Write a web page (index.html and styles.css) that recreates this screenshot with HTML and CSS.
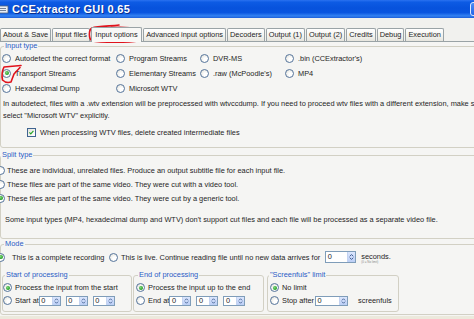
FILE: index.html
```html
<!DOCTYPE html>
<html>
<head>
<meta charset="utf-8">
<title>CCExtractor GUI 0.65</title>
<link rel="stylesheet" href="styles.css">
</head>
<body>
<div class="win">
  <div class="titlebar">
    <svg class="appicon" viewBox="0 0 10 9"><rect x="-2" y="1" width="10" height="7" fill="#e9eef7" stroke="#55657c" stroke-width="0.8"/><path d="M-1 3.5h7M-1 5.5h7" stroke="#55657c" stroke-width="0.8"/></svg>
    <span class="title">CCExtractor GUI 0.65</span>
    <span class="tbtn"></span>
  </div>
  <div class="tabbar">
    <span class="tab">About &amp; Save</span>
    <span class="tab">Input files</span>
    <span class="tab tab-sel">Input options</span>
    <span class="tab">Advanced input options</span>
    <span class="tab">Decoders</span>
    <span class="tab">Output (1)</span>
    <span class="tab">Output (2)</span>
    <span class="tab">Credits</span>
    <span class="tab">Debug</span>
    <span class="tab">Execution</span>
  </div>
  <div class="panel">
    <fieldset class="grp g-input">
      <legend>Input type</legend>
      <div class="rgrid">
        <div class="opt"><span class="rb"></span>Autodetect the correct format</div>
        <div class="opt"><span class="rb"></span>Program Streams</div>
        <div class="opt"><span class="rb"></span>DVR-MS</div>
        <div class="opt"><span class="rb"></span>.bin (CCExtractor's)</div>
        <div class="opt"><span class="rb on"></span>Transport Streams</div>
        <div class="opt"><span class="rb"></span>Elementary Streams</div>
        <div class="opt"><span class="rb"></span>.raw (McPoodle's)</div>
        <div class="opt"><span class="rb"></span>MP4</div>
        <div class="opt"><span class="rb"></span>Hexadecimal Dump</div>
        <div class="opt"><span class="rb"></span>Microsoft WTV</div>
      </div>
      <p class="note">In autodetect, files with a .wtv extension will be preprocessed with wtvccdump. If you need to proceed wtv files with a different extension, make sure to<br>select "Microsoft WTV" explicitly.</p>
      <div class="chk-row"><span class="cb"><svg viewBox="0 0 9 9"><path d="M1.8 4.4 L3.6 6.3 L7 2.4" fill="none" stroke="#22a322" stroke-width="1.4"/></svg></span>When processing WTV files, delete created intermediate files</div>
    </fieldset>

    <fieldset class="grp g-split">
      <legend>Split type</legend>
      <div class="split-rows">
        <div class="opt opt-split"><span class="rb"></span>These are individual, unrelated files. Produce an output subtitle file for each input file.</div>
        <div class="opt opt-split"><span class="rb"></span>These files are part of the same video. They were cut with a video tool.</div>
        <div class="opt opt-split"><span class="rb on"></span>These files are part of the same video. They were cut by a generic tool.</div>
      </div>
      <p class="note note-split">Some input types (MP4, hexadecimal dump and WTV) don't support cut files and each file will be processed as a separate video file.</p>
    </fieldset>

    <fieldset class="grp g-mode">
      <legend>Mode</legend>
      <div class="mode-row">
        <div class="opt opt-complete"><span class="rb on"></span>This is a complete recording</div>
        <div class="opt opt-live"><span class="rb"></span>This is live. Continue reading file until no new data arrives for</div>
        <span class="spin spin-m"><span class="v">0</span><span class="btns"><svg viewBox="0 0 8 10"><path d="M2 4.2 L4 2.2 L6 4.2 M2 5.8 L4 7.8 L6 5.8" fill="none" stroke="#3c5a8c" stroke-width="1.1"/></svg></span></span>
        <span class="secs"><span>seconds.</span><span class="tiny">(0 = No limit)</span></span>
      </div>
      <div class="subs">
        <fieldset class="grp sub s-start">
          <legend>Start of processing</legend>
          <div class="opt opt-sub"><span class="rb on"></span>Process the input from the start</div>
          <div class="opt opt-sub"><span class="rb"></span>Start at
            <span class="spins">
              <span class="spin"><span class="v">0</span><span class="btns"><svg viewBox="0 0 8 10"><path d="M2 4.2 L4 2.2 L6 4.2 M2 5.8 L4 7.8 L6 5.8" fill="none" stroke="#3c5a8c" stroke-width="1.1"/></svg></span></span>
              <span class="spin"><span class="v">0</span><span class="btns"><svg viewBox="0 0 8 10"><path d="M2 4.2 L4 2.2 L6 4.2 M2 5.8 L4 7.8 L6 5.8" fill="none" stroke="#3c5a8c" stroke-width="1.1"/></svg></span></span>
              <span class="spin"><span class="v">0</span><span class="btns"><svg viewBox="0 0 8 10"><path d="M2 4.2 L4 2.2 L6 4.2 M2 5.8 L4 7.8 L6 5.8" fill="none" stroke="#3c5a8c" stroke-width="1.1"/></svg></span></span>
            </span>
          </div>
        </fieldset>
        <fieldset class="grp sub s-end">
          <legend>End of processing</legend>
          <div class="opt opt-sub"><span class="rb on"></span>Process the input up to the end</div>
          <div class="opt opt-sub"><span class="rb"></span>End at
            <span class="spins">
              <span class="spin"><span class="v">0</span><span class="btns"><svg viewBox="0 0 8 10"><path d="M2 4.2 L4 2.2 L6 4.2 M2 5.8 L4 7.8 L6 5.8" fill="none" stroke="#3c5a8c" stroke-width="1.1"/></svg></span></span>
              <span class="spin"><span class="v">0</span><span class="btns"><svg viewBox="0 0 8 10"><path d="M2 4.2 L4 2.2 L6 4.2 M2 5.8 L4 7.8 L6 5.8" fill="none" stroke="#3c5a8c" stroke-width="1.1"/></svg></span></span>
              <span class="spin"><span class="v">0</span><span class="btns"><svg viewBox="0 0 8 10"><path d="M2 4.2 L4 2.2 L6 4.2 M2 5.8 L4 7.8 L6 5.8" fill="none" stroke="#3c5a8c" stroke-width="1.1"/></svg></span></span>
            </span>
          </div>
        </fieldset>
        <fieldset class="grp sub s-scr">
          <legend>"Screenfuls" limit</legend>
          <div class="opt opt-sub"><span class="rb on"></span>No limit</div>
          <div class="opt opt-sub"><span class="rb"></span>Stop after<span class="spin spin-s"><span class="v">0</span><span class="btns"><svg viewBox="0 0 8 10"><path d="M2 4.2 L4 2.2 L6 4.2 M2 5.8 L4 7.8 L6 5.8" fill="none" stroke="#3c5a8c" stroke-width="1.1"/></svg></span></span><span class="scr-lbl">screenfuls</span></div>
        </fieldset>
      </div>
    </fieldset>
  </div>

  <svg class="annot" viewBox="0 0 474 319">
    <path d="M119 25 C110 26 97 26.5 92 28 C88.5 30 88.5 38.5 92 41 C100 42.6 130 42.6 138 41 C141.8 39 141.8 31 138.5 29 C131 27.4 121 27 111 27.6" fill="none" stroke="#e0121c" stroke-width="1.6" stroke-linecap="round"/>
    <path d="M21 65.5 L4 67 Q1 73 2.5 80 Q6 83.5 11 82 L14 74 L20 67.5" fill="none" stroke="#e0121c" stroke-width="1.6" stroke-linecap="round" stroke-linejoin="round"/>
  </svg>
</div>
</body>
</html>
```

FILE: styles.css
```css
* { box-sizing: border-box; }

html, body {
  margin: 0;
  padding: 0;
}

body {
  width: 474px;
  height: 319px;
  overflow: hidden;
  background: #ece9dc;
  font-family: "Liberation Sans", Arial, sans-serif;
  font-size: 7.4px;
  color: #1e1e1e;
}

.win {
  position: relative;
  width: 474px;
  height: 319px;
  overflow: hidden;
  display: flex;
  flex-direction: column;
}

/* Title bar */
.titlebar {
  flex: none;
  height: 18px;
  display: flex;
  align-items: center;
  background: linear-gradient(to bottom, #2a72f0 0%, #0d5be4 12%, #0752dc 45%, #0a56e0 70%, #3382f2 88%, #1d5fd9 100%);
}

.appicon {
  flex: none;
  width: 10px;
  height: 9px;
}

.title {
  margin-left: 2px;
  color: #fff;
  font-weight: bold;
  font-size: 11px;
  letter-spacing: 0.35px;
  text-shadow: 1px 1px 0 #0b2f8f;
  white-space: nowrap;
}

.tbtn {
  flex: none;
  margin-left: auto;
  margin-right: -12px;
  width: 16px;
  height: 14px;
  border: 1px solid #dfe8fb;
  border-radius: 3px;
  background: linear-gradient(#4d8ff6, #2465e6);
}

/* Tabs */
.tabbar {
  flex: none;
  height: 24px;
  display: flex;
  align-items: flex-end;
  gap: 1px;
  background: #f1f1ee;
  border-bottom: 1px solid #9aa3a6;
}

.tab {
  height: 13px;
  padding: 0 2px;
  display: flex;
  align-items: center;
  white-space: nowrap;
  line-height: 1;
  border: 1px solid #9aa3a6;
  border-bottom: none;
  border-radius: 2px 2px 0 0;
  background: linear-gradient(#ffffff, #f3f3ef 55%, #e6e5de);
}

.tab-sel {
  height: 15px;
  margin-bottom: -1px;
  padding: 0 3.5px;
  background: #f8f8f6;
  position: relative;
  z-index: 1;
}

/* Panel */
.panel {
  flex: none;
  background: #f5f5f3;
  display: flex;
  flex-direction: column;
  padding-bottom: 1px;
}

.grp {
  margin: 0;
  padding: 0;
  min-width: 0;
  border: 1px solid #d2d0c4;
  border-radius: 3px;
}

.grp > legend {
  margin-left: 3px;
  padding: 0 1px;
  line-height: 8px;
  font-size: 7.4px;
  color: #2a5cc6;
  white-space: nowrap;
}

.opt {
  display: flex;
  align-items: center;
  gap: 4px;
  white-space: nowrap;
}

.rb {
  flex: none;
  position: relative;
  width: 9px;
  height: 9px;
  border-radius: 50%;
  border: 1px solid #56759c;
  background: radial-gradient(circle at 65% 65%, #ffffff 25%, #e2e2da 90%);
}

.rb.on::after {
  content: "";
  position: absolute;
  left: 1.5px;
  top: 1.5px;
  width: 4px;
  height: 4px;
  border-radius: 50%;
  background: radial-gradient(circle at 40% 40%, #7fd77f, #1f9c1f 70%);
}

/* Input type */
.g-input {
  width: 482px;
  padding-bottom: 8px;
}

.rgrid {
  display: grid;
  grid-template-columns: 114px 84px 85px auto;
  grid-auto-rows: 15px;
  padding-left: 1px;
  margin-top: 0.5px;
}

.note {
  margin: 2px 0 0 2px;
  line-height: 12px;
  white-space: nowrap;
}

.chk-row {
  display: flex;
  align-items: center;
  gap: 4px;
  height: 14px;
  margin: 3.5px 0 0 26px;
  white-space: nowrap;
}

.cb {
  flex: none;
  width: 9px;
  height: 9px;
  border: 1px solid #3f6490;
  background: linear-gradient(135deg, #e4e4dc, #ffffff);
  display: flex;
}

.cb svg {
  width: 100%;
  height: 100%;
}

/* Split type */
.g-split {
  width: 482px;
  margin-top: 3px;
  padding-bottom: 12px;
}

.g-split > legend {
  margin-left: 0;
}

.split-rows {
  display: flex;
  flex-direction: column;
  margin: 4px 0 0 -5px;
}

.opt-split {
  height: 14px;
  gap: 2px;
}

.note-split {
  margin: 9px 0 0 4px;
}

/* Mode */
.g-mode {
  width: 482px;
  margin-top: 1px;
  padding-bottom: 2px;
}

.mode-row {
  display: flex;
  align-items: center;
  height: 14px;
  margin: 2px 0 0 -5px;
}

.opt-complete {
  width: 113px;
  gap: 7px;
}

.opt-live {
  gap: 3px;
}

.spin {
  flex: none;
  display: flex;
  align-items: stretch;
  width: 22px;
  height: 10px;
  border: 1px solid #7f9db9;
  background: #fff;
}

.spin .v {
  flex: 1;
  padding-left: 1.5px;
  line-height: 8px;
}

.spin .btns {
  flex: none;
  width: 8px;
  display: flex;
  background: linear-gradient(#dbe6fd, #bccff6);
  border-left: 1px solid #c4d3f1;
}

.spin .btns svg {
  width: 100%;
  height: 100%;
}

.spin-m {
  width: 31px;
  height: 12px;
  margin-left: 5px;
}

.spin-m .v {
  line-height: 10px;
}

.secs {
  display: flex;
  flex-direction: column;
  margin-left: 5px;
  line-height: 9px;
  padding-top: 2px;
}

.tiny {
  font-size: 3px;
  line-height: 3px;
  color: #8a8a8a;
}

.subs {
  display: flex;
  margin-top: 7px;
}

.sub {
  padding: 2px 0 4px 0;
}

.sub .opt-sub {
  height: 13px;
  gap: 3px;
}

.s-start {
  width: 130px;
  margin-left: 1px;
}

.s-start > legend {
  margin-left: 2px;
}

.s-end {
  width: 131px;
  margin-left: 1px;
  padding-left: 2px;
}

.s-end > legend {
  margin-left: 2px;
}

.s-scr {
  width: 132px;
  margin-left: 3px;
  padding-left: 2px;
}

.s-scr > legend {
  margin-left: -1px;
}

.spins {
  display: flex;
  gap: 5px;
  margin-left: -3px;
}

.spin-s {
  width: 33px;
  margin-left: -2px;
}

.scr-lbl {
  margin-left: 7px;
}

/* Annotation overlay */
.annot {
  position: absolute;
  left: 0;
  top: 0;
  width: 474px;
  height: 319px;
  pointer-events: none;
}
```
